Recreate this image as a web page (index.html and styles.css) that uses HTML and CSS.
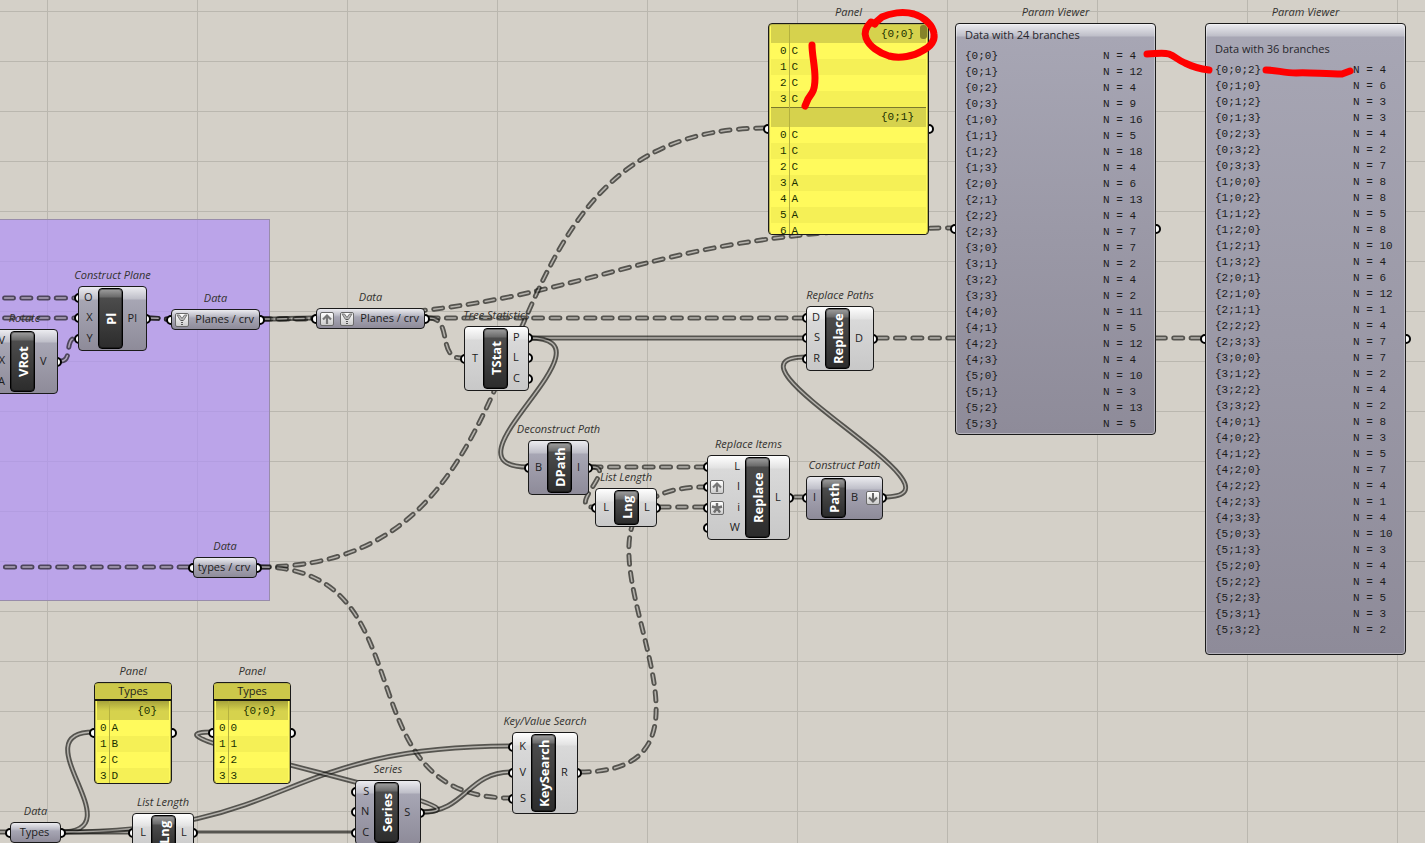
FILE: index.html
```html
<!DOCTYPE html>
<html lang="en">
  <head>
    <meta charset="UTF-8" />
    <meta name="viewport" content="width=device-width, initial-scale=1.0" />
    <title>Definition Canvas</title>
    <link rel="stylesheet" href="styles.css">
  </head>

  <body>
    <!-- Icon symbols used by the nodes -->
    <svg class="symbols" aria-hidden="true">
      <symbol id="icon-up" viewBox="0 0 12 12">
        <path d="M6 11V3M2 6.5L6 2.5L10 6.5" fill="none" stroke="#777" stroke-width="2.2" />
      </symbol>
      <symbol id="icon-down" viewBox="0 0 12 12">
        <path d="M6 1V9M2 5.5L6 9.5L10 5.5" fill="none" stroke="#666" stroke-width="2" />
      </symbol>
      <symbol id="icon-star" viewBox="0 0 12 12">
        <path d="M6 6V1M6 6L1 4.5M6 6L11 4.5M6 6L3 10.5M6 6L9 10.5" fill="none" stroke="#707070" stroke-width="2.4" />
      </symbol>
      <symbol id="icon-simplify" viewBox="0 0 12 12">
        <path d="M1 1H3.500L6 4.500L8.500 1H11L7.500 6.500H4.500Z" fill="#bbb" stroke="#777" />
        <path d="M6 6V12" fill="none" stroke="#555" stroke-width="2" stroke-dasharray="1 1" />
      </symbol>
    </svg>

    <main class="canvas">
      <div class="group"></div>
      <svg class="wires" id="wires"></svg>

      <section class="node grey rotate">
        <h2>Rotate</h2>
        <div class="body">
          <ul class="inputs"><li>V</li><li>X</li><li>A</li></ul>
          <div class="core">VRot</div>
          <ul class="outputs"><li>V</li></ul>
        </div>
      </section>

      <section class="node grey construct-plane">
        <h2>Construct Plane</h2>
        <div class="body">
          <ul class="inputs"><li>O</li><li>X</li><li>Y</li></ul>
          <div class="core">Pl</div>
          <ul class="outputs"><li>Pl</li></ul>
        </div>
      </section>

      <section class="node grey param planes-a">
        <h2>Data</h2>
        <div class="body">
          <svg class="icon"><use href="#icon-simplify" /></svg>
          <span>Planes / crv</span>
        </div>
      </section>

      <section class="node grey param planes-b">
        <h2>Data</h2>
        <div class="body">
          <svg class="icon"><use href="#icon-up" /></svg>
          <svg class="icon"><use href="#icon-simplify" /></svg>
          <span>Planes / crv</span>
        </div>
      </section>

      <section class="node tree-statistics">
        <h2>Tree Statistics</h2>
        <div class="body">
          <ul class="inputs"><li>T</li></ul>
          <div class="core">TStat</div>
          <ul class="outputs"><li>P</li><li>L</li><li>C</li></ul>
        </div>
      </section>

      <section class="node grey deconstruct-path">
        <h2>Deconstruct Path</h2>
        <div class="body">
          <ul class="inputs"><li>B</li></ul>
          <div class="core">DPath</div>
          <ul class="outputs"><li>I</li></ul>
        </div>
      </section>

      <section class="node list-length-a">
        <h2>List Length</h2>
        <div class="body">
          <ul class="inputs"><li>L</li></ul>
          <div class="core">Lng</div>
          <ul class="outputs"><li>L</li></ul>
        </div>
      </section>

      <section class="node replace-items">
        <h2>Replace Items</h2>
        <div class="body">
          <ul class="inputs">
            <li>L</li>
            <li><svg class="icon"><use href="#icon-up" /></svg>I</li>
            <li><svg class="icon"><use href="#icon-star" /></svg>i</li>
            <li>W</li>
          </ul>
          <div class="core">Replace</div>
          <ul class="outputs"><li>L</li></ul>
        </div>
      </section>

      <section class="node replace-paths">
        <h2>Replace Paths</h2>
        <div class="body">
          <ul class="inputs"><li>D</li><li>S</li><li>R</li></ul>
          <div class="core">Replace</div>
          <ul class="outputs"><li>D</li></ul>
        </div>
      </section>

      <section class="node grey construct-path">
        <h2>Construct Path</h2>
        <div class="body">
          <ul class="inputs"><li>I</li></ul>
          <div class="core">Path</div>
          <ul class="outputs"><li>B<svg class="icon"><use href="#icon-down" /></svg></li></ul>
        </div>
      </section>

      <section class="node grey param types-crv">
        <h2>Data</h2>
        <div class="body"><span>types / crv</span></div>
      </section>

      <section class="node grey param types">
        <h2>Data</h2>
        <div class="body"><span>Types</span></div>
      </section>

      <section class="node list-length-b">
        <h2>List Length</h2>
        <div class="body">
          <ul class="inputs"><li>L</li></ul>
          <div class="core">Lng</div>
          <ul class="outputs"><li>L</li></ul>
        </div>
      </section>

      <section class="node grey series">
        <h2>Series</h2>
        <div class="body">
          <ul class="inputs"><li>S</li><li>N</li><li>C</li></ul>
          <div class="core">Series</div>
          <ul class="outputs"><li>S</li></ul>
        </div>
      </section>

      <section class="node key-search">
        <h2>Key/Value Search</h2>
        <div class="body">
          <ul class="inputs"><li>K</li><li>V</li><li>S</li></ul>
          <div class="core">KeySearch</div>
          <ul class="outputs"><li>R</li></ul>
        </div>
      </section>

      <section class="node panel panel-a">
        <h2>Panel</h2>
        <div class="body">
          <h3>Types</h3>
          <table>
            <tr class="path shaded"><th></th><th>{0}</th></tr>
            <tr><td>0</td><td>A</td></tr>
            <tr><td>1</td><td>B</td></tr>
            <tr><td>2</td><td>C</td></tr>
            <tr><td>3</td><td>D</td></tr>
          </table>
        </div>
      </section>

      <section class="node panel panel-b">
        <h2>Panel</h2>
        <div class="body">
          <h3>Types</h3>
          <table>
            <tr class="path shaded"><th></th><th>{0;0}</th></tr>
            <tr><td>0</td><td>0</td></tr>
            <tr><td>1</td><td>1</td></tr>
            <tr><td>2</td><td>2</td></tr>
            <tr><td>3</td><td>3</td></tr>
          </table>
        </div>
      </section>

      <section class="node panel panel-main">
        <h2>Panel</h2>
        <div class="body">
          <table>
            <tbody>
              <tr class="path"><th></th><th>{0;0}</th></tr>
              <tr><td>0</td><td>C</td></tr>
              <tr><td>1</td><td>C</td></tr>
              <tr><td>2</td><td>C</td></tr>
              <tr><td>3</td><td>C</td></tr>
            </tbody>
            <tbody>
              <tr class="path next"><th></th><th>{0;1}</th></tr>
              <tr><td>0</td><td>C</td></tr>
              <tr><td>1</td><td>C</td></tr>
              <tr><td>2</td><td>C</td></tr>
              <tr><td>3</td><td>A</td></tr>
              <tr><td>4</td><td>A</td></tr>
              <tr><td>5</td><td>A</td></tr>
              <tr><td>6</td><td>A</td></tr>
            </tbody>
          </table>
        </div>
        <div class="scroll-thumb"></div>
      </section>

      <section class="node grey viewer viewer-a">
        <h2>Param Viewer</h2>
        <div class="body">
          <p>Data with 24 branches</p>
          <table id="branches24"></table>
        </div>
      </section>

      <section class="node grey viewer viewer-b">
        <h2>Param Viewer</h2>
        <div class="body">
          <p>Data with 36 branches</p>
          <table id="branches36"></table>
        </div>
      </section>

      <!-- Red pen marks -->
      <svg class="marks" aria-hidden="true">
        <path d="M875 24L871 22C866 27 864 33 866 38C869 46 879 53 889 56C900 59 914 56 922 51C930 47 935 41 934 34C933 25 924 17 914 14C903 11 890 13 882 17L875 23" />
        <path d="M812 45C812 55 815 66 815 78C815 85 814 90 812 93L808 99L805 106" />
        <path d="M1147 54C1155 54 1162 52 1169 54C1175 56 1179 61 1185 63C1193 67 1201 69 1209 70" />
        <path d="M1266 70C1276 70 1284 73 1296 73C1306 72 1324 74 1342 74L1350 71" />
      </svg>
    </main>

    <script src="script.js"></script>
  </body>
</html>
```

FILE: styles.css
```css
*,
*::before,
*::after {
  box-sizing: border-box;
}

body {
  margin: 0;
  font-family: "Open Sans", "Noto Sans", sans-serif;
  font-size: 11px;
  line-height: 14px;
  color: #1c1c1c;
}

.symbols {
  display: none;
}

.canvas {
  position: relative;
  height: 100vh;
  overflow: hidden;
  background-color: #d4d0c8;
  background-image: linear-gradient(90deg, #bab7af 1px, transparent 1px),
    linear-gradient(#bab7af 1px, transparent 1px);
  background-size: 150px 50px;
  background-position: 47px 11px;
}

.group {
  position: absolute;
  left: -1px;
  top: 219px;
  width: 271px;
  height: 382px;
  background: rgba(176, 145, 246, 0.7);
  border: 1px solid #988cab;
}

.wires,
.marks {
  position: absolute;
  left: 0;
  top: 0;
  width: 100%;
  height: 100%;
  fill: none;
  pointer-events: none;
}

.marks {
  stroke: #ff0000;
  stroke-width: 7px;
  stroke-linecap: round;
  stroke-linejoin: round;
}

/* Wires */
.wire {
  opacity: 0.66;
}

.wire path {
  stroke: #151512;
  stroke-width: 5px;
}

.wire path + path {
  stroke: #a8a6a2;
  stroke-width: 1.5px;
}

.wire.tree path {
  stroke-linecap: round;
  stroke-dasharray: 9 8.4;
}

.wire.item path {
  stroke-width: 3px;
}

/* Nodes */
.node {
  position: absolute;
  isolation: isolate;
}

.node h2 {
  position: absolute;
  left: 50%;
  bottom: 100%;
  margin: 0 0 4px;
  transform: translateX(-50%);
  font-size: 11px;
  font-weight: normal;
  font-style: italic;
  white-space: nowrap;
  color: #33322f;
}

.body {
  display: flex;
  height: 100%;
  padding: 1px 0;
  border: 1px solid #1a1a1a;
  border-radius: 4px;
  background: linear-gradient(#fff, #e2e2e2 12px, #d9d9d9 13px, #c8c8c8);
}

.grey .body {
  background: linear-gradient(#ececf0, #bebec8 12px, #a7a6b4 13px, #8e8b99);
}

.inputs,
.outputs {
  display: flex;
  flex-direction: column;
  margin: 0;
  padding: 0;
  list-style: none;
}

.inputs {
  flex: 0 0 18px;
}

.outputs {
  flex: 1;
}

.inputs li,
.outputs li {
  position: relative;
  display: flex;
  align-items: center;
  flex: 1;
  padding: 0 5px 2px;
}

.inputs li {
  justify-content: flex-end;
}

/* Connection grips sit behind the node body */
.inputs li::before,
.outputs li::after,
.param::before,
.param::after,
.panel::before,
.panel::after,
.viewer::before,
.viewer::after {
  content: "";
  position: absolute;
  z-index: -1;
  top: 50%;
  width: 10px;
  height: 10px;
  margin-top: -5px;
  border: 2px solid #000;
  border-radius: 50%;
  background: #fff;
}

.inputs li::before,
.param::before,
.panel::before,
.viewer::before {
  left: -5px;
}

.outputs li::after,
.param::after,
.panel::after,
.viewer::after {
  right: -5px;
}

.core {
  width: 25px;
  display: flex;
  align-items: center;
  justify-content: center;
  border: 1px solid #000;
  border-radius: 4px;
  background: linear-gradient(to top, #a0a0a0, #6a6a6a 8px, #4c4c4c 9px, #2c2c2c);
  box-shadow: inset 0 0 0 1px rgba(0, 0, 0, 0.35);
  color: #fff;
  font-size: 13px;
  line-height: 18px;
  font-weight: bold;
  white-space: nowrap;
  writing-mode: vertical-rl;
  transform: rotate(180deg);
}

.icon {
  flex: none;
  width: 14px;
  height: 14px;
  border: 1px solid #6a6a6a;
  border-radius: 2px;
  background: linear-gradient(#fff, #ccc);
}

.param .body {
  align-items: center;
  justify-content: center;
  padding: 0 5px 2px 3px;
  background: linear-gradient(#ececf0, #bebec8 6px, #a7a6b4 8px, #8e8b99);
  white-space: nowrap;
}

.param .icon {
  margin: 2px 6px 0 0;
}

.param .icon + span {
  margin-left: auto;
}

.rotate {
  left: -9px;
  top: 329px;
  width: 67px;
  height: 65px;
}

.construct-plane {
  left: 78px;
  top: 286px;
  width: 69px;
  height: 65px;
}

.planes-a {
  left: 171px;
  top: 309px;
  width: 89px;
  height: 21px;
}

.planes-b {
  left: 316px;
  top: 308px;
  width: 109px;
  height: 21px;
}

.tree-statistics {
  left: 464px;
  top: 326px;
  width: 65px;
  height: 65px;
}

.deconstruct-path {
  left: 528px;
  top: 440px;
  width: 61px;
  height: 55px;
}

.list-length-a {
  left: 595px;
  top: 488px;
  width: 62px;
  height: 39px;
}

.list-length-b {
  left: 132px;
  top: 813px;
  width: 62px;
  height: 39px;
}

.replace-items {
  left: 707px;
  top: 455px;
  width: 83px;
  height: 85px;
}

.replace-items .inputs {
  flex: 0 0 37px;
}

.replace-items .icon {
  margin: 2px auto 0 -3px;
}

.replace-paths {
  left: 806px;
  top: 306px;
  width: 68px;
  height: 65px;
}

.construct-path {
  left: 806px;
  top: 476px;
  width: 77px;
  height: 44px;
}

.construct-path .inputs {
  flex: 0 0 14px;
}

.construct-path .outputs .icon {
  margin: 2px -3px 0 auto;
}

.types-crv {
  left: 193px;
  top: 557px;
  width: 64px;
  height: 21px;
}

.types {
  left: 10px;
  top: 822px;
  width: 51px;
  height: 21px;
}

.series {
  left: 355px;
  top: 780px;
  width: 66px;
  height: 65px;
}

.key-search {
  left: 512px;
  top: 732px;
  width: 66px;
  height: 82px;
}

/* Panels */
.panel .body {
  display: block;
  padding: 1px 2px;
  overflow: hidden;
  background: #fffa5c;
  box-shadow: inset 0 0 0 1px #b9b548;
}

.panel h3 {
  height: 17px;
  margin: 0 -2px;
  border-bottom: 2px solid #1a1a10;
  background: #ccc84a;
  font-size: 11px;
  font-weight: normal;
  text-align: center;
}

.panel table,
.viewer table {
  width: 100%;
  border-collapse: collapse;
  font-family: "Liberation Mono", "Courier New", monospace;
  font-size: 11px;
  line-height: 16px;
}

.panel tr {
  height: 16px;
  background: #fffa5c;
}

.panel tr:nth-child(odd) {
  background: #f5f056;
}

.panel td,
.panel th {
  padding: 0 2px;
  font-weight: normal;
  text-align: left;
  color: #1a3000;
}

.panel td:first-child,
.panel th:first-child {
  width: 18px;
  text-align: right;
  border-right: 1px solid #b5b13e;
}

.panel tr.path {
  height: 18px;
  background: #d6d24d;
}

.panel .path th:last-child {
  padding-right: 12px;
  text-align: right;
}

.panel tr.shaded {
  height: 19px;
  background: linear-gradient(#a7a33a, #d6d24d 10px);
}

.panel tr.next {
  height: 19px;
  border-top: 1px solid #7b792c;
}

.scroll-thumb {
  position: absolute;
  top: 2px;
  right: 2px;
  width: 7px;
  height: 14px;
  border-radius: 3px;
  background: #858229;
}

.panel-a,
.panel-b {
  width: 78px;
  height: 102px;
}

.panel-a {
  left: 94px;
  top: 682px;
}

.panel-b {
  left: 213px;
  top: 682px;
}

.panel-a td:first-child,
.panel-a th:first-child,
.panel-b td:first-child,
.panel-b th:first-child {
  width: 12px;
}

.panel-main {
  left: 768px;
  top: 23px;
  width: 161px;
  height: 212px;
}

/* Param viewers */
.viewer {
  width: 201px;
}

.viewer .body {
  flex-direction: column;
  justify-content: center;
  padding: 1px 9px 0;
  box-shadow: inset 0 0 0 1px rgba(255, 255, 255, 0.35);
}

.viewer p {
  margin: 0 0 6px;
  color: #26262c;
}

.viewer td {
  padding: 0;
}

.viewer td:last-child {
  width: 43px;
  white-space: pre;
}

.viewer-a {
  left: 955px;
  top: 23px;
  height: 412px;
}

.viewer-b {
  left: 1205px;
  top: 23px;
  height: 632px;
}
```

FILE: script.js
```javascript
// Branch path and item count for each viewer
const branches24 =
  "0;0 4,0;1 12,0;2 4,0;3 9,1;0 16,1;1 5,1;2 18,1;3 4,2;0 6,2;1 13,2;2 4,2;3 7," +
  "3;0 7,3;1 2,3;2 4,3;3 2,4;0 11,4;1 5,4;2 12,4;3 4,5;0 10,5;1 3,5;2 13,5;3 5";

const branches36 =
  "0;0;2 4,0;1;0 6,0;1;2 3,0;1;3 3,0;2;3 4,0;3;2 2,0;3;3 7,1;0;0 8,1;0;2 8," +
  "1;1;2 5,1;2;0 8,1;2;1 10,1;3;2 4,2;0;1 6,2;1;0 12,2;1;1 1,2;2;2 4,2;3;3 7," +
  "3;0;0 7,3;1;2 2,3;2;2 4,3;3;2 2,4;0;1 8,4;0;2 3,4;1;2 5,4;2;0 7,4;2;2 4," +
  "4;2;3 1,4;3;3 4,5;0;3 10,5;1;3 3,5;2;0 4,5;2;2 4,5;2;3 5,5;3;1 3,5;3;2 2";

function fillViewer(id, data) {
  const table = document.getElementById(id);
  data.split(",").forEach((entry) => {
    const [path, count] = entry.split(" ");
    const row = table.insertRow();
    row.insertCell().textContent = `{${path}}`;
    row.insertCell().textContent = `N = ${count}`;
  });
}

// type, x1, y1, x2, y2, horizontal pull (half the distance when left out)
const wires = [
  ["tree", -13, 298, 76, 298],
  ["tree", -13, 318, 76, 318],
  ["tree", 61, 361, 76, 338, 12],
  ["tree", 149, 318, 170, 319],
  ["tree", 149, 318, 170, 319],
  ["tree", 262, 319, 313, 319],
  ["list", 262, 319, 313, 318],
  ["tree", 260, 319, 952, 228],
  ["tree", 429, 318, 803, 318],
  ["tree", 429, 318, 461, 358, 24],
  ["tree", 260, 567, 766, 128, 320],
  ["tree", 260, 567, 510, 798, 170],
  ["tree", -12, 567, 190, 567],
  ["list", 529, 338, 806, 338],
  ["list", 529, 338, 528, 467, 95],
  ["list", 883, 497, 806, 357, 102],
  ["tree", 592, 467, 705, 467],
  ["tree", 592, 467, 593, 507, 26],
  ["tree", 660, 507, 705, 507],
  ["tree", 580, 772, 705, 487, 195],
  ["tree", 795, 497, 802, 497],
  ["tree", 878, 338, 1203, 338],
  ["list", 0, 832, 10, 832],
  ["list", 61, 832, 94, 732, 75],
  ["list", 61, 832, 132, 832],
  ["list", 61, 832, 512, 746, 235],
  ["item", 194, 832, 355, 832],
  ["list", 421, 812, 512, 772],
  ["list", 421, 812, 213, 732, 102],
];

function drawWires() {
  const ns = "http://www.w3.org/2000/svg";
  const svg = document.getElementById("wires");

  wires.forEach(([type, x1, y1, x2, y2, pull]) => {
    const dx = pull === undefined ? (x2 - x1) / 2 : pull;
    const d = `M${x1} ${y1}C${x1 + dx} ${y1} ${x2 - dx} ${y2} ${x2} ${y2}`;
    const group = document.createElementNS(ns, "g");
    group.setAttribute("class", `wire ${type}`);

    // dark outline first, light centre on top of it
    const strokes = type === "item" ? 1 : 2;
    for (let i = 0; i < strokes; i++) {
      const path = document.createElementNS(ns, "path");
      path.setAttribute("d", d);
      group.appendChild(path);
    }
    svg.appendChild(group);
  });
}

fillViewer("branches24", branches24);
fillViewer("branches36", branches36);
drawWires();
```
